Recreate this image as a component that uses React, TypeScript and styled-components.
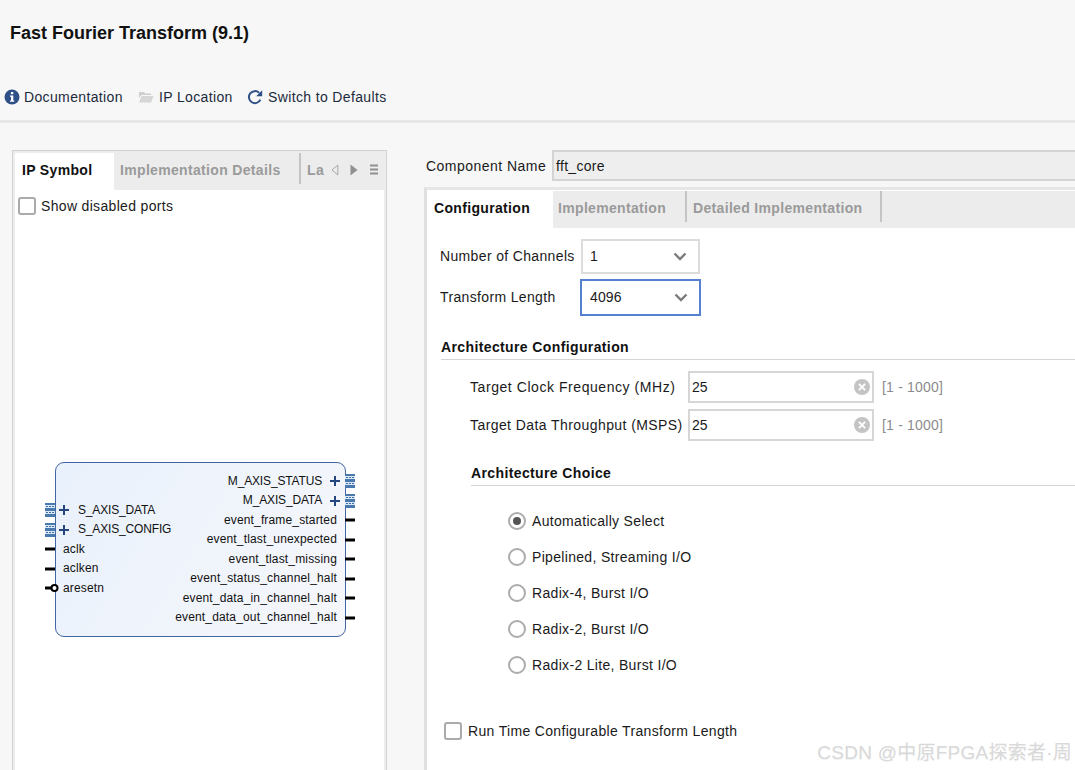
import React from "react";
import styled, { createGlobalStyle } from "styled-components";

const Global = createGlobalStyle`
  html, body { margin: 0; padding: 0; background: #f7f7f7; }
  * { box-sizing: border-box; }
  body { font-family: "Liberation Sans", Arial, sans-serif; color: #111; }
`;

const Page = styled.div`
  position: relative;
  width: 1075px;
  height: 770px;
  overflow: hidden;
  background: #f7f7f7;
  display: flex;
  flex-direction: column;
  font-size: 14px;
`;
const Header = styled.header`
  height: 123px;
  flex: none;
  border-bottom: 3px solid #e6e6e6;
  padding: 23px 0 0 10px;
`;
const Title = styled.h1`
  margin: 0;
  font-size: 18px;
  line-height: 20px;
  font-weight: 700;
  color: #111;
`;
const Toolbar = styled.div`
  display: flex;
  align-items: center;
  margin: 44px 0 0 -6px;
  height: 20px;
`;
const ToolItem = styled.div<{ $w: number; $gap: number }>`
  display: flex;
  align-items: center;
  width: ${(p) => p.$w}px;
  gap: ${(p) => p.$gap}px;
  color: #1c2b3c;
  letter-spacing: 0.36px;
  white-space: nowrap;
`;
const Body = styled.div`
  flex: 1;
  display: flex;
  padding: 27px 0 0 12px;
  min-height: 0;
`;
const LeftPanel = styled.section`
  width: 375px;
  flex: none;
  height: 640px;
  border: 1px solid #d2d2d2;
  padding: 2px;
  background: #ededed;
  display: flex;
  flex-direction: column;
`;
const TabBar = styled.div<{ $h: number }>`
  display: flex;
  align-items: stretch;
  height: ${(p) => p.$h}px;
  flex: none;
  background: #ececec;
`;
const Tab = styled.div<{ $w: number; $active?: boolean; $sep?: boolean; $pad?: number }>`
  width: ${(p) => p.$w}px;
  flex: none;
  display: flex;
  align-items: center;
  padding-left: ${(p) => p.$pad ?? 6}px;
  padding-bottom: 4px;
  font-weight: 700;
  font-size: 14px;
  letter-spacing: 0.33px;
  white-space: nowrap;
  overflow: hidden;
  background: ${(p) => (p.$active ? "#ffffff" : "transparent")};
  color: ${(p) => (p.$active ? "#111" : "#9a9a9a")};
  position: relative;
  ${(p) =>
    p.$sep
      ? `&::after { content: ""; position: absolute; right: 0; top: 0; bottom: 6px; width: 2px; background: #c4c4c4; }`
      : ""}
`;
const TabTools = styled.div`
  display: flex;
  align-items: center;
  gap: 11px;
  margin-left: 2px;
  padding-bottom: 4px;
`;
const LeftContent = styled.div`
  flex: 1;
  background: #fff;
  display: flex;
  flex-direction: column;
  padding-top: 6px;
`;
const CheckRow = styled.label<{ $ml: number; $gap: number }>`
  display: flex;
  align-items: center;
  gap: ${(p) => p.$gap}px;
  margin-left: ${(p) => p.$ml}px;
  height: 20px;
  letter-spacing: 0.33px;
  color: #1a1a1a;
`;
const CheckBox = styled.span`
  width: 18px;
  height: 18px;
  flex: none;
  background: #fff;
  border: 2px solid #ababab;
  border-radius: 3px;
`;
const Canvas = styled.div`
  flex: 1;
  padding: 246px 0 0 40px;
`;
const Block = styled.div`
  position: relative;
  width: 291px;
  height: 175px;
  border: 1.5px solid #4266a4;
  border-radius: 9px;
  background: linear-gradient(120deg, #e9f1fc 0%, #f0f4fb 55%, #f6f7fb 100%);
  display: flex;
  justify-content: space-between;
  font-size: 12px;
  color: #111;
`;
const PortCol = styled.div<{ $top: number; $right?: boolean }>`
  display: flex;
  flex-direction: column;
  padding-top: ${(p) => p.$top}px;
  align-items: ${(p) => (p.$right ? "flex-end" : "flex-start")};
`;
const PortRow = styled.div<{ $side: "l" | "r"; $inset: number; $bus: boolean }>`
  position: relative;
  height: 19.5px;
  line-height: 19.5px;
  white-space: nowrap;
  letter-spacing: ${(p) => (p.$bus ? "-0.16px" : "0.16px")};
  ${(p) => (p.$side === "l" ? `padding-left: ${p.$inset}px;` : `padding-right: ${p.$inset}px;`)}
`;
const PinSlot = styled.span<{ $side: "l" | "r" }>`
  position: absolute;
  top: 50%;
  transform: translateY(-50%);
  display: flex;
  align-items: center;
  ${(p) => (p.$side === "l" ? "left: -11px;" : "right: -10px; flex-direction: row-reverse;")}
`;
const Stub = styled.span`
  display: block;
  width: 10px;
  height: 3px;
  background: #000;
`;
const PlusGap = styled.span<{ $side: "l" | "r" }>`
  display: flex;
  ${(p) => (p.$side === "l" ? "margin-left: 4px;" : "margin-right: 5px;")}
`;
const RightPanel = styled.section`
  flex: 1;
  min-width: 0;
  margin-left: 37px;
  display: flex;
  flex-direction: column;
`;
const NameRow = styled.div`
  display: flex;
  align-items: center;
  height: 31px;
  margin-left: 2px;
  letter-spacing: 0.47px;
  color: #1a1a1a;
`;
const NameLabel = styled.span`
  width: 126px;
  flex: none;
  white-space: nowrap;
`;
const NameInput = styled.div`
  flex: 1;
  height: 31px;
  line-height: 29px;
  background: #eeeeee;
  border: 2px solid #d4d4d4;
  border-right: 0;
  padding-left: 2px;
  letter-spacing: 0.3px;
`;
const ConfigPanel = styled.div`
  margin-top: 6px;
  flex: 1;
  border-left: 3px solid #e0e0e0;
  border-top: 3px solid #e6e6e6;
  background: #fff;
  display: flex;
  flex-direction: column;
  min-height: 0;
  padding-top: 1px;
`;
const ConfigBody = styled.div`
  padding: 10px 0 0 0;
  display: flex;
  flex-direction: column;
  flex: 1;
`;
const SelectRow = styled.div`
  display: flex;
  align-items: center;
  margin: 0 0 5px 13px;
  height: 36px;
  letter-spacing: 0.35px;
  color: #1a1a1a;
`;
const SelectLabel = styled.span`
  width: 141px;
  flex: none;
  white-space: nowrap;
`;
const Select = styled.div<{ $focus?: boolean }>`
  width: ${(p) => (p.$focus ? 121 : 119)}px;
  height: ${(p) => (p.$focus ? 37 : 35)}px;
  margin-left: ${(p) => (p.$focus ? -1 : 0)}px;
  border: 2px solid ${(p) => (p.$focus ? "#5580cf" : "#dcdcdc")};
  display: flex;
  align-items: center;
  justify-content: space-between;
  padding: 0 11px 0 ${(p) => (p.$focus ? 8 : 7)}px;
  background: #fff;
  letter-spacing: 0.1px;
`;
const SectionTitle = styled.div<{ $ml: number; $mt: number }>`
  margin: ${(p) => p.$mt}px 0 0 ${(p) => p.$ml}px;
  height: 20px;
  line-height: 20px;
  font-weight: 700;
  font-size: 14px;
  letter-spacing: 0.38px;
  border-bottom: 1px solid #d4d4d4;
  box-sizing: content-box;
  padding-bottom: 2px;
`;
const FieldGroup = styled.div`
  margin-top: 11px;
`;
const Field = styled.div`
  display: flex;
  align-items: center;
  margin: 0 0 6px 43px;
  height: 32px;
  color: #1a1a1a;
`;
const FieldLabel = styled.span<{ $ls: number }>`
  width: 218px;
  flex: none;
  white-space: nowrap;
  letter-spacing: ${(p) => p.$ls}px;
`;
const TextInput = styled.div`
  width: 186px;
  height: 32px;
  border: 2px solid #d6d6d6;
  display: flex;
  align-items: center;
  justify-content: space-between;
  padding: 0 2px 0 2px;
  background: #fff;
`;
const Hint = styled.span`
  margin-left: 8px;
  color: #8c8c8c;
  letter-spacing: 0.2px;
`;
const RadioGroup = styled.div`
  display: flex;
  flex-direction: column;
  margin: 17px 0 0 81px;
`;
const RadioRow = styled.div`
  display: flex;
  align-items: center;
  gap: 6px;
  height: 36px;
  letter-spacing: 0.32px;
  color: #1a1a1a;
`;
const Radio = styled.span<{ $on?: boolean }>`
  width: 18px;
  height: 18px;
  flex: none;
  border-radius: 50%;
  border: 2px solid #acacac;
  background: #fff;
  display: flex;
  align-items: center;
  justify-content: center;
  &::after {
    content: "";
    width: 8px;
    height: 8px;
    border-radius: 50%;
    background: ${(p) => (p.$on ? "#555" : "transparent")};
  }
`;
const ConfigCheck = styled.div`
  margin-top: 38px;
`;
const Watermark = styled.div`
  position: absolute;
  right: 3px;
  bottom: 6px;
  font-size: 19px;
  line-height: 22px;
  letter-spacing: 0.25px;
  color: #d9d9d9;
  text-shadow: 0 1px 0 #f3f3f3;
  font-family: "Liberation Sans", "Noto Sans CJK SC", sans-serif;
  white-space: nowrap;
`;

const InfoIcon = () => (
  <svg width="16" height="16" viewBox="0 0 16 16">
    <circle cx="8" cy="8" r="7.5" fill="#2f4f87" />
    <rect x="6.9" y="3" width="2.4" height="2.2" fill="#fff" />
    <path d="M5.9 6.5h3.4v5h1v1.3H6v-1.3h1v-3.7H5.9z" fill="#fff" />
  </svg>
);
const FolderIcon = () => (
  <svg width="16" height="14" viewBox="0 0 16 14">
    <path d="M1 2h5l1.2 1.5H13V5H3.5L1 8z" fill="#cfcfcf" />
    <path d="M1 12.5 3.6 6H15.5l-2.4 6.5z" fill="#d6d6d6" />
  </svg>
);
const RefreshIcon = () => (
  <svg width="16" height="16" viewBox="0 0 16 16" fill="none">
    <path d="M13.4 10.6A6 6 0 1 1 12.2 3.9" stroke="#2f4f87" strokeWidth="2" />
    <path d="M15.2 1.2v6h-6z" fill="#2f4f87" />
  </svg>
);
const TriLeft = () => (
  <svg width="8" height="12" viewBox="0 0 8 12">
    <path d="M6.8 1 1 6l5.8 5z" fill="none" stroke="#a8a8a8" strokeWidth="1" />
  </svg>
);
const TriRight = () => (
  <svg width="8" height="12" viewBox="0 0 8 12">
    <path d="M.5.5 7.5 6 .5 11.5z" fill="#909090" />
  </svg>
);
const MenuIcon = () => (
  <svg width="10" height="11" viewBox="0 0 10 11">
    <path d="M1 .5h8v2H1zM1 4.5h8v2H1zM1 8.5h8v2H1z" fill="#909090" />
  </svg>
);
const Chevron = () => (
  <svg width="14" height="9" viewBox="0 0 14 9">
    <path d="M1.5 1.5 7 7l5.5-5.5" fill="none" stroke="#7b7b7b" strokeWidth="2.4" />
  </svg>
);
const ClearIcon = () => (
  <svg width="16" height="16" viewBox="0 0 16 16">
    <circle cx="8" cy="8" r="8" fill="#c4c4c4" />
    <path d="M4.9 4.9l6.2 6.2M11.1 4.9l-6.2 6.2" stroke="#fff" strokeWidth="1.9" />
  </svg>
);
const Plus = () => (
  <svg width="10" height="10" viewBox="0 0 10 10">
    <path d="M4 0h2v4h4v2H6v4H4V6H0V4h4z" fill="#26467f" />
  </svg>
);
const BusPin = () => (
  <svg width="10" height="14" viewBox="0 0 10 14" shapeRendering="crispEdges">
    <rect width="10" height="14" fill="#4a79ad" />
    <rect y="2" width="10" height="3" fill="#dbe7f4" />
    <rect y="8" width="10" height="3" fill="#dbe7f4" />
    <path d="M1 3h2v1H1zM4 3h2v1H4zM7 3h2v1H7zM1 9h2v1H1zM4 9h2v1H4zM7 9h2v1H7z" fill="#3f6fa6" />
  </svg>
);
const InvertPin = () => (
  <svg width="14" height="10" viewBox="0 0 14 10">
    <rect x="0" y="3.5" width="7" height="3" fill="#000" />
    <circle cx="9.5" cy="5" r="3" fill="#fff" stroke="#000" strokeWidth="2" />
  </svg>
);

const leftPorts: { name: string; kind: "bus" | "wire" | "inv" }[] = [
  { name: "S_AXIS_DATA", kind: "bus" },
  { name: "S_AXIS_CONFIG", kind: "bus" },
  { name: "aclk", kind: "wire" },
  { name: "aclken", kind: "wire" },
  { name: "aresetn", kind: "inv" },
];
const rightPorts: { name: string; kind: "bus" | "wire" }[] = [
  { name: "M_AXIS_STATUS", kind: "bus" },
  { name: "M_AXIS_DATA", kind: "bus" },
  { name: "event_frame_started", kind: "wire" },
  { name: "event_tlast_unexpected", kind: "wire" },
  { name: "event_tlast_missing", kind: "wire" },
  { name: "event_status_channel_halt", kind: "wire" },
  { name: "event_data_in_channel_halt", kind: "wire" },
  { name: "event_data_out_channel_halt", kind: "wire" },
];

const radios = [
  "Automatically Select",
  "Pipelined, Streaming I/O",
  "Radix-4, Burst I/O",
  "Radix-2, Burst I/O",
  "Radix-2 Lite, Burst I/O",
];

export default function App() {
  return (
    <Page>
      <Global />
      <Header>
        <Title>Fast Fourier Transform (9.1)</Title>
        <Toolbar>
          <ToolItem $w={134} $gap={4}>
            <InfoIcon />
            Documentation
          </ToolItem>
          <ToolItem $w={109} $gap={5}>
            <FolderIcon />
            IP Location
          </ToolItem>
          <ToolItem $w={150} $gap={5}>
            <RefreshIcon />
            Switch to Defaults
          </ToolItem>
        </Toolbar>
      </Header>
      <Body>
        <LeftPanel>
          <TabBar $h={37}>
            <Tab $w={99} $active $pad={7}>IP Symbol</Tab>
            <Tab $w={187} $sep>Implementation Details</Tab>
            <Tab $w={28} $pad={6}>La</Tab>
            <TabTools>
              <TriLeft />
              <TriRight />
              <MenuIcon />
            </TabTools>
          </TabBar>
          <LeftContent>
            <CheckRow $ml={3} $gap={5}>
              <CheckBox />
              Show disabled ports
            </CheckRow>
            <Canvas>
              <Block>
                <PortCol $top={37.5}>
                  {leftPorts.map((p) => (
                    <PortRow key={p.name} $side="l" $bus={p.kind === "bus"} $inset={p.kind === "bus" ? 22 : 7}>
                      <PinSlot $side="l">
                        {p.kind === "bus" && <BusPin />}
                        {p.kind === "bus" && (
                          <PlusGap $side="l">
                            <Plus />
                          </PlusGap>
                        )}
                        {p.kind === "wire" && <Stub />}
                        {p.kind === "inv" && <InvertPin />}
                      </PinSlot>
                      {p.name}
                    </PortRow>
                  ))}
                </PortCol>
                <PortCol $top={8.5} $right>
                  {rightPorts.map((p) => (
                    <PortRow key={p.name} $side="r" $bus={p.kind === "bus"} $inset={p.kind === "bus" ? 23 : 8}>
                      {p.name}
                      <PinSlot $side="r">
                        {p.kind === "bus" ? <BusPin /> : <Stub />}
                        {p.kind === "bus" && (
                          <PlusGap $side="r">
                            <Plus />
                          </PlusGap>
                        )}
                      </PinSlot>
                    </PortRow>
                  ))}
                </PortCol>
              </Block>
            </Canvas>
          </LeftContent>
        </LeftPanel>
        <RightPanel>
          <NameRow>
            <NameLabel>Component Name</NameLabel>
            <NameInput>fft_core</NameInput>
          </NameRow>
          <ConfigPanel>
            <TabBar $h={37}>
              <Tab $w={126} $active $pad={7}>Configuration</Tab>
              <Tab $w={134} $sep $pad={5}>Implementation</Tab>
              <Tab $w={195} $sep>Detailed Implementation</Tab>
            </TabBar>
            <ConfigBody>
              <SelectRow>
                <SelectLabel>Number of Channels</SelectLabel>
                <Select>
                  1
                  <Chevron />
                </Select>
              </SelectRow>
              <SelectRow>
                <SelectLabel>Transform Length</SelectLabel>
                <Select $focus>
                  4096
                  <Chevron />
                </Select>
              </SelectRow>
              <SectionTitle $ml={14} $mt={17}>Architecture Configuration</SectionTitle>
              <FieldGroup>
                <Field>
                  <FieldLabel $ls={0.56}>Target Clock Frequency (MHz)</FieldLabel>
                  <TextInput>
                    25
                    <ClearIcon />
                  </TextInput>
                  <Hint>[1 - 1000]</Hint>
                </Field>
                <Field>
                  <FieldLabel $ls={0.42}>Target Data Throughput (MSPS)</FieldLabel>
                  <TextInput>
                    25
                    <ClearIcon />
                  </TextInput>
                  <Hint>[1 - 1000]</Hint>
                </Field>
              </FieldGroup>
              <SectionTitle $ml={44} $mt={16}>Architecture Choice</SectionTitle>
              <RadioGroup>
                {radios.map((r, i) => (
                  <RadioRow key={r}>
                    <Radio $on={i === 0} />
                    {r}
                  </RadioRow>
                ))}
              </RadioGroup>
              <ConfigCheck>
                <CheckRow $ml={17} $gap={6}>
                  <CheckBox />
                  Run Time Configurable Transform Length
                </CheckRow>
              </ConfigCheck>
            </ConfigBody>
          </ConfigPanel>
        </RightPanel>
      </Body>
      <Watermark>CSDN @中原FPGA探索者·周</Watermark>
    </Page>
  );
}
